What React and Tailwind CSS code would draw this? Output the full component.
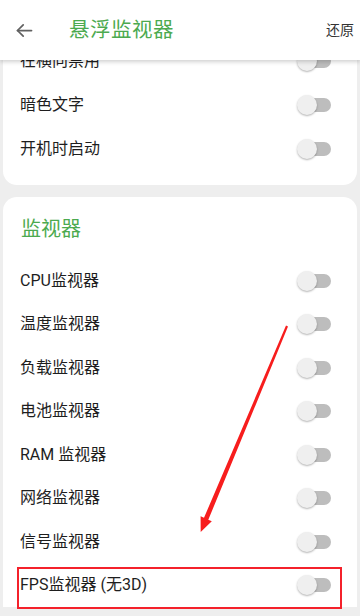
import React from 'react';

const topRows = ['在横向禁用', '暗色文字', '开机时启动'];
const monitorRows = [
  'CPU监视器',
  '温度监视器',
  '负载监视器',
  '电池监视器',
  'RAM 监视器',
  '网络监视器',
  '信号监视器',
  'FPS监视器 (无3D)'
];

const Toggle = () => (
  <div className="relative w-[34px] h-5 shrink-0">
    <div className="absolute left-[4px] right-0 top-[3px] h-[14px] rounded-full bg-[#bdbdbd]" />
    <div className="absolute left-0 top-0 w-5 h-5 rounded-full bg-[#efefef] shadow-[0_1px_2px_rgba(0,0,0,0.3)]" />
  </div>
);

const Row = ({ label, height = 'h-[44px]', marked }) => (
  <div className={`relative flex items-center justify-between pl-[17px] pr-[26px] ${height}`}>
    <span className="text-[16px] text-[#1e1e1e]">{label}</span>
    <Toggle />
    {marked && (
      <div className="absolute left-[14px] right-[15px] top-[3px] h-[42px] border-2 border-[#f4212b]" />
    )}
  </div>
);

export default function App() {
  return (
    <div
      className="relative w-[360px] h-[616px] overflow-hidden bg-[#eeeeee]"
      style={{ fontFamily: 'Roboto, "Noto Sans CJK SC", sans-serif' }}
    >
      {/* Header */}
      <div className="relative z-10 h-[60px] bg-white flex items-center shadow-[0_2px_4px_rgba(0,0,0,0.18)]">
        <div className="w-[69px] pl-[14px] flex items-center">
          <svg width="21" height="21" viewBox="0 0 24 24" fill="none" stroke="#616161" strokeWidth="2" strokeLinecap="round" strokeLinejoin="round">
            <path d="M20 12H4" />
            <path d="M10.5 5.5L4 12l6.5 6.5" />
          </svg>
        </div>
        <h1 className="flex-1 text-[20.5px] text-[#4caa4f] tracking-[0.5px]">悬浮监视器</h1>
        <span className="pr-[6px] text-[14px] text-[#333333]">还原</span>
      </div>

      {/* Content */}
      <div className="-mt-[21px]">
        <div className="mx-[3px] bg-white rounded-[14px] pb-[14px]">
          {topRows.map(r => (
            <Row key={r} label={r} />
          ))}
        </div>

        <div className="mx-[3px] mt-[12px] bg-white rounded-t-[14px] pt-[18px]">
          <h2 className="pl-[18px] mb-[16px] h-[28px] leading-[28px] text-[20px] text-[#4caa4f]">监视器</h2>
          {monitorRows.map((r, i) => (
            <Row key={r} label={r} height="h-[43.5px]" marked={i === monitorRows.length - 1} />
          ))}
        </div>
      </div>

      {/* Annotation arrow */}
      <svg className="absolute inset-0 pointer-events-none" width="360" height="616" viewBox="0 0 360 616">
        <polygon
          fill="#f71d1d"
          points="288,326.4 208.3,519.8 211.8,521.2 200.7,532 200.6,516.3 204,517.8 286,325.6"
        />
      </svg>
    </div>
  );
}
